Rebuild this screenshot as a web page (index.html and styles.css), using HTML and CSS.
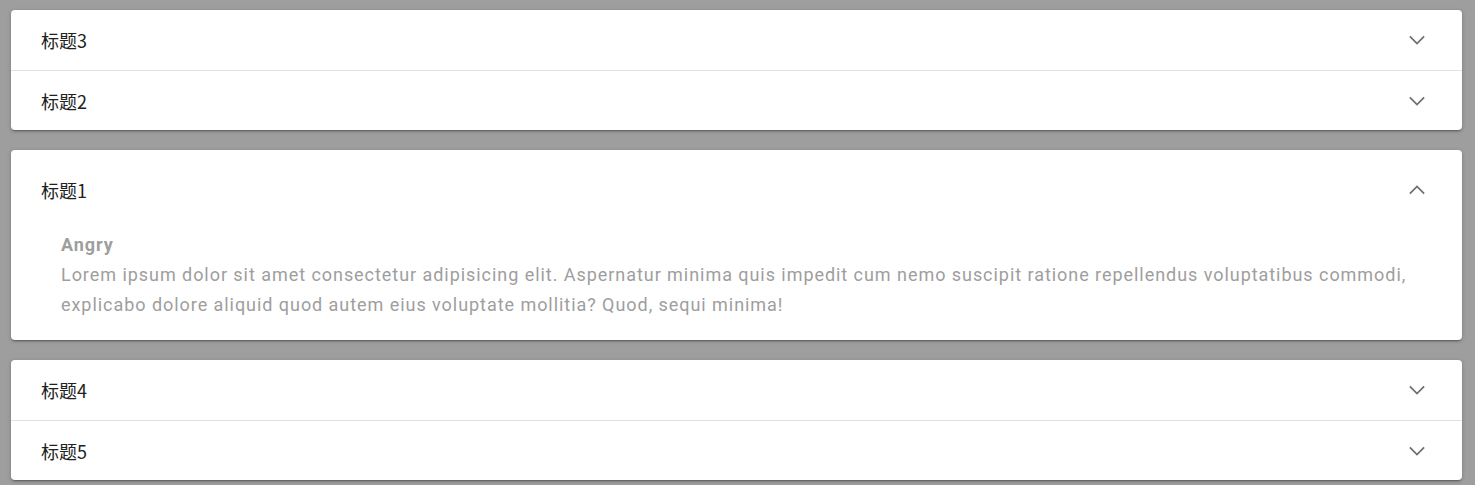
FILE: index.html
```html
<!DOCTYPE html>
<html>
<head>
    <meta charset="UTF-8">
    <meta name="viewport" content="width=device-width, initial-scale=1.0">
    <title>Expansion Panels</title>
    <link rel="stylesheet" href="styles.css">
</head>
<body>

<div class="panels">
    <div class="panel-group">
        <div class="panel">
            <div class="panel-header">
                <span class="panel-title">标题3</span>
                <svg class="chevron" viewBox="0 0 18 10"><polyline points="1,1 9,9 17,1"/></svg>
            </div>
        </div>
        <div class="panel">
            <div class="panel-header">
                <span class="panel-title">标题2</span>
                <svg class="chevron" viewBox="0 0 18 10"><polyline points="1,1 9,9 17,1"/></svg>
            </div>
        </div>
    </div>

    <div class="panel-group">
        <div class="panel active">
            <div class="panel-header">
                <span class="panel-title">标题1</span>
                <svg class="chevron" viewBox="0 0 18 10"><polyline points="1,9 9,1 17,9"/></svg>
            </div>
            <div class="panel-body">
                <div class="body-title">Angry</div>
                <p>Lorem ipsum dolor sit amet consectetur adipisicing elit. Aspernatur minima quis impedit cum nemo suscipit ratione repellendus voluptatibus commodi, explicabo dolore aliquid quod autem eius voluptate mollitia? Quod, sequi minima!</p>
            </div>
        </div>
    </div>

    <div class="panel-group">
        <div class="panel">
            <div class="panel-header">
                <span class="panel-title">标题4</span>
                <svg class="chevron" viewBox="0 0 18 10"><polyline points="1,1 9,9 17,1"/></svg>
            </div>
        </div>
        <div class="panel">
            <div class="panel-header">
                <span class="panel-title">标题5</span>
                <svg class="chevron" viewBox="0 0 18 10"><polyline points="1,1 9,9 17,1"/></svg>
            </div>
        </div>
    </div>
</div>

</body>
</html>
```
FILE: styles.css
```css
body {
    margin: 0;
    padding: 10px 13px 0 11px;
    background-color: #9e9e9e;
    font-family: Roboto, "Noto Sans CJK SC", sans-serif;
}

.panel-group {
    background-color: white;
    border-radius: 4px;
    box-shadow: 0 2px 2px -1px rgba(0, 0, 0, 0.35), 0 1px 4px rgba(0, 0, 0, 0.2);
    margin-bottom: 20px;
}

.panel + .panel {
    border-top: 1px solid #e0e0e0;
}

.panel-header {
    display: flex;
    align-items: center;
    justify-content: space-between;
    height: 60px;
    padding: 0 37px 0 30px;
    box-sizing: border-box;
}

.panel + .panel .panel-header {
    height: 59px;
}

.panel.active .panel-header {
    height: 80px;
}

.panel-title {
    font-family: "Noto Sans CJK SC", sans-serif;
    font-size: 18px;
    line-height: 18px;
    color: #212121;
}

.chevron {
    width: 16px;
    height: 10px;
    fill: none;
    stroke: #6f6f6f;
    stroke-width: 2;
}

.panel-body {
    padding: 0 30px 20px 50px;
    color: #9e9e9e;
    font-size: 18px;
    line-height: 30px;
    letter-spacing: 0.95px;
}

.body-title {
    font-weight: bold;
}

.panel-body p {
    margin: 0;
}
```
